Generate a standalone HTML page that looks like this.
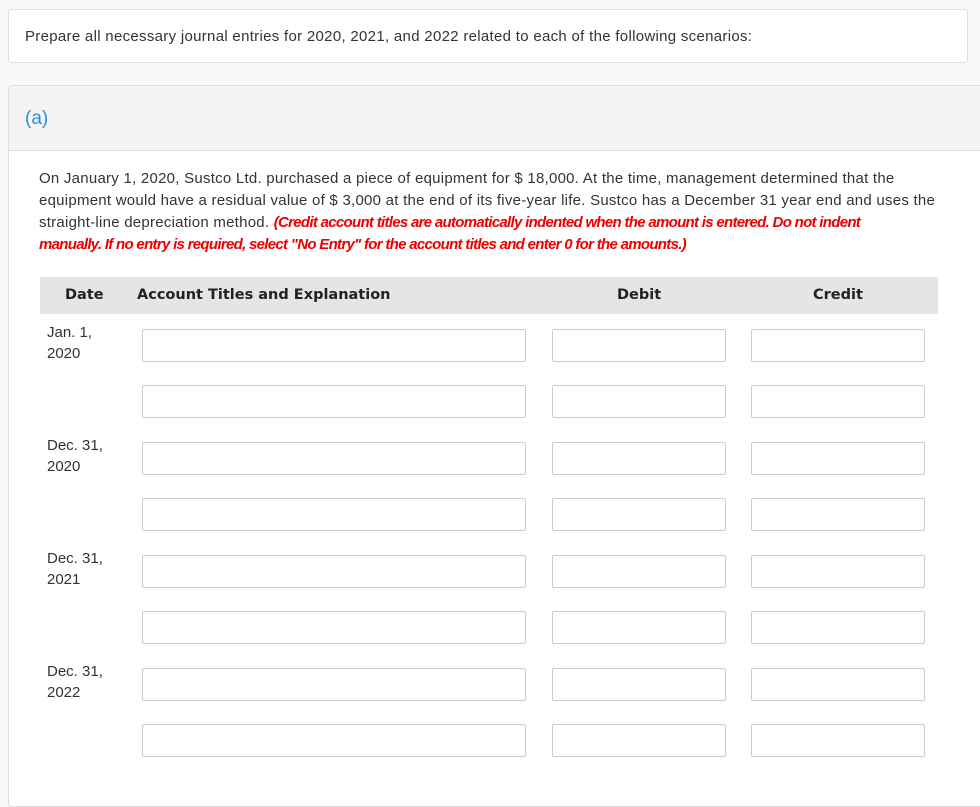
<!DOCTYPE html>
<html><head><style>
body{margin:0;width:980px;height:788px;background:#f9f9f9;font-family:"Liberation Sans",sans-serif;position:relative;overflow:hidden}
.card{position:absolute;left:8px;top:9px;width:958px;height:52px;background:#fff;border:1px solid #ddd;border-radius:3px}
.card p{margin:0;position:absolute;left:16px;top:18px;font-size:15px;color:#333;letter-spacing:0.3px}
.panel{position:absolute;left:8px;top:85px;width:990px;height:720px;background:#fff;border:1px solid #ddd;border-radius:3px}
.ph{height:64px;background:#f4f4f4;border-bottom:1px solid #ddd;position:relative}
.ph span{position:absolute;left:16px;top:22px;color:#2a8fd8;font-size:19px}
.txt{position:absolute;left:30px;top:82px;width:920px;font-size:15px;line-height:22px;color:#333;white-space:nowrap;letter-spacing:0.25px}
.red{color:#e00;font-weight:bold;font-style:italic;letter-spacing:-0.7px}
.th{position:absolute;left:31px;top:191px;width:898px;height:37px;background:#e5e5e5;font-family:"DejaVu Sans",sans-serif;font-size:14.5px;font-weight:bold;color:#222}
.th span{position:absolute;top:10px}
.inp{position:absolute;height:31px;border:1px solid #ccc;border-radius:2px;background:#fff}
.d{position:absolute;left:38px;font-family:"Liberation Sans",sans-serif;font-size:15px;line-height:21px;color:#333}
</style></head><body>
<div class="card"><p>Prepare all necessary journal entries for 2020, 2021, and 2022 related to each of the following scenarios:</p></div>
<div class="panel">
<div class="ph"><span>(a)</span></div>
<div class="txt">On January 1, 2020, Sustco Ltd. purchased a piece of equipment for $ 18,000. At the time, management determined that the<br>equipment would have a residual value of $ 3,000 at the end of its five-year life. Sustco has a December 31 year end and uses the<br>straight-line depreciation method. <span class="red">(Credit account titles are automatically indented when the amount is entered. Do not indent<br>manually. If no entry is required, select "No Entry" for the account titles and enter 0 for the amounts.)</span></div>
<div class="th"><span style="left:25px">Date</span><span style="left:97px">Account Titles and Explanation</span><span style="left:577px">Debit</span><span style="left:773px">Credit</span></div>
<div class="d" style="top:236px">Jan. 1,<br>2020</div>
<div class="d" style="top:349px">Dec. 31,<br>2020</div>
<div class="d" style="top:462px">Dec. 31,<br>2021</div>
<div class="d" style="top:575px">Dec. 31,<br>2022</div>
</div>
<div id="rows"></div>
<script>
var ys=[329,385,442,498,555,611,668,724],h='';
ys.forEach(function(y){h+='<div class="inp" style="left:142px;top:'+y+'px;width:382px"></div><div class="inp" style="left:552px;top:'+y+'px;width:172px"></div><div class="inp" style="left:751px;top:'+y+'px;width:172px"></div>';});
document.getElementById('rows').innerHTML=h;
</script>
</body></html>
